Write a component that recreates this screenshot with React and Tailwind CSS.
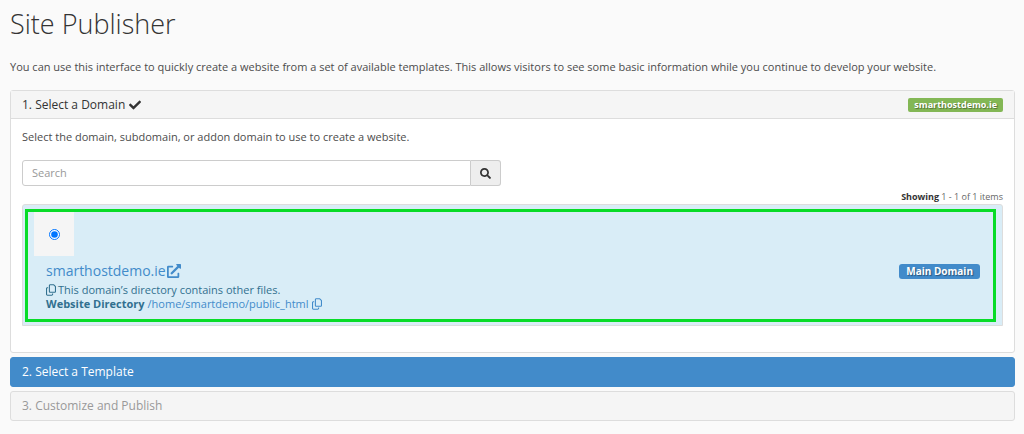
import React, { useState } from 'react';
import { FaCheck, FaSearch, FaExternalLinkAlt } from 'react-icons/fa';
import { FaRegCopy } from 'react-icons/fa6';

const domains = [
  {
    name: 'smarthostdemo.ie',
    directory: '/home/smartdemo/public_html',
    note: 'This domain’s directory contains other files.',
    type: 'Main Domain'
  }
];

const DomainRow = ({ domain, checked, onSelect }) => (
  <li className="border-3 border-[#08dc28] px-[6px] pb-2">
    <label className="flex w-10 h-11 items-center justify-center bg-[#f5f5f5]">
      <input
        type="radio"
        name="domain"
        aria-label={domain.name}
        className="w-[11px] h-[11px]"
        checked={checked}
        onChange={onSelect}
      />
    </label>
    <div className="flex justify-between pl-3 pr-[7px] pt-1">
      <div>
        <a
          href="#domain"
          className="flex items-center gap-px text-[14px] leading-[22px] text-[#428bca]"
        >
          {domain.name}
          <FaExternalLinkAlt className="w-[14px] h-[14px]" />
        </a>
        <p className="flex items-center gap-[2px] leading-[14px] mt-px">
          <FaRegCopy className="w-[10px] h-3" />
          {domain.note}
        </p>
        <p className="flex items-center gap-[3px] leading-[14px]">
          <strong className="font-bold">Website Directory</strong>
          <a href="#directory" className="flex items-center gap-[3px] text-[#428bca]">
            {domain.directory}
            <FaRegCopy className="w-[10px] h-3" />
          </a>
        </p>
      </div>
      <span className="self-start mt-1 rounded-[3px] bg-[#428bca] px-[7px] text-[10px] leading-[15px] font-bold text-white [text-shadow:1px_1px_1px_rgba(0,0,0,0.4)]">
        {domain.type}
      </span>
    </div>
  </li>
);

const App = () => {
  const [selected, setSelected] = useState('smarthostdemo.ie');
  const [search, setSearch] = useState('');

  return (
    <main className="min-h-screen bg-[#fafafa] pl-[10px] pr-[9px] pt-[5px] pb-3 font-['Open_Sans',sans-serif] text-[11px] text-[#4c4c4c]">
      <h1 className="text-[27px] leading-[38px] font-light text-[#333]">Site Publisher</h1>
      <p className="mt-4 leading-4">
        You can use this interface to quickly create a website from a set of available templates.
        This allows visitors to see some basic information while you continue to develop your
        website.
      </p>

      <section className="mt-[15px] rounded-[3px] border border-[#ddd] bg-white">
        <header className="flex items-center justify-between border-b border-[#ddd] bg-[#f5f5f5] px-[11px] h-7">
          <h2 className="flex items-center gap-1 text-[12px] text-[#333]">
            1. Select a Domain
            <FaCheck className="w-3 h-3" />
          </h2>
          <span className="rounded-[2px] bg-[#83b755] px-[6px] text-[9px] leading-[14px] font-bold text-white [text-shadow:1px_1px_1px_rgba(0,0,0,0.4)]">
            {selected}
          </span>
        </header>

        <div className="px-[11px] pt-[10px] pb-[26px]">
          <p className="leading-4">
            Select the domain, subdomain, or addon domain to use to create a website.
          </p>
          <div className="mt-[15px] flex w-[calc(50%-12px)] h-[26px]">
            <input
              type="text"
              aria-label="Search"
              placeholder="Search"
              className="min-w-0 flex-1 rounded-l-[3px] border border-[#ccc] bg-white px-[9px] placeholder:text-[#999]"
              value={search}
              onChange={(e) => setSearch(e.target.value)}
            />
            <button
              type="button"
              aria-label="Search"
              className="flex w-[30px] items-center justify-center rounded-r-[3px] border border-l-0 border-[#ccc] bg-[#eee] text-[#333]"
            >
              <FaSearch className="w-[11px] h-[11px]" />
            </button>
          </div>
          <p className="mt-1 text-right text-[9px] leading-[14px] text-[#666]">
            <strong className="font-bold text-[#333]">Showing</strong> 1 - 1 of 1 items
          </p>
          <ul className="border border-[#ddd] rounded-t-[3px] bg-[#d9edf7] pt-1 pr-[6px] pb-[3px] pl-[2px] text-[#31708f]">
            {domains.map((domain) => (
              <DomainRow
                key={domain.name}
                domain={domain}
                checked={selected === domain.name}
                onSelect={() => setSelected(domain.name)}
              />
            ))}
          </ul>
        </div>
      </section>

      <button
        type="button"
        className="mt-1 block w-full h-[30px] rounded-[3px] border border-[#428bca] bg-[#428bca] px-[11px] text-left text-[12px] text-white"
      >
        2. Select a Template
      </button>
      <button
        type="button"
        disabled
        className="mt-1 block w-full h-[30px] rounded-[3px] border border-[#ddd] bg-[#f5f5f5] px-[11px] text-left text-[12px] text-[#999]"
      >
        3. Customize and Publish
      </button>
    </main>
  );
};

export default App;
